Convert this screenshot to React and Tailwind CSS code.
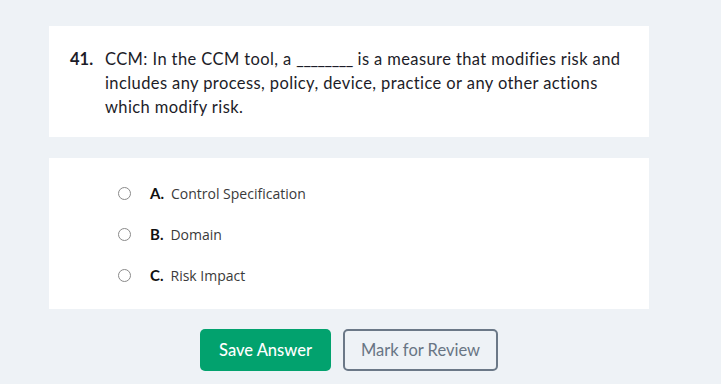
export default function App() {
  const options = [
    { key: 'A', text: 'Control Specification' },
    { key: 'B', text: 'Domain' },
    { key: 'C', text: 'Risk Impact' },
  ]

  return (
    <div className="min-h-[384px] w-[721px] bg-[#eef2f6] pt-[26px]" style={{ fontFamily: 'Lato, "Noto Sans", sans-serif' }}>
      <div className="ml-[49px] w-[600px]">
        {/* question */}
        <div className="h-[111px] bg-white pl-[21px] pt-[21px]">
          <div className="flex text-[16.5px] leading-[24px] text-[#1c1c28]">
            <span className="w-[35px] shrink-0 font-bold">41.</span>
            <p className="whitespace-nowrap tracking-[0.4px]" style={{ fontVariantLigatures: 'none' }}>
              CCM: In the CCM tool, a <span className="tracking-[-0.5px]">________</span> is a measure that modifies risk and<br />
              includes any process, policy, device, practice or any other actions<br />
              which modify risk.
            </p>
          </div>
        </div>

        {/* options */}
        <div className="mt-[21px] flex h-[151px] flex-col gap-[17px] bg-white pl-[69px] pt-[23px]">
          {options.map(o => (
            <label key={o.key} className="flex h-[24px] items-center">
              <span className="h-[13px] w-[13px] rounded-full border border-[#8a8a8a] bg-white" />
              <span className="ml-[19px] text-[15px] font-bold text-[#111]">{o.key}.</span>
              <span className="ml-[7px] text-[14px] text-[#3a3a3a]" style={{ fontFamily: '"Open Sans", sans-serif' }}>{o.text}</span>
            </label>
          ))}
        </div>

        {/* actions */}
        <div className="mt-[20px] flex justify-center gap-[12px]">
          <button className="h-[42px] w-[131px] rounded-[5px] bg-[#02a26e] text-[16.5px] font-medium text-white">
            Save Answer
          </button>
          <button className="h-[42px] w-[155px] rounded-[5px] border-2 border-[#6b7887] text-[16.5px] text-[#687584]">
            Mark for Review
          </button>
        </div>
      </div>
    </div>
  )
}
